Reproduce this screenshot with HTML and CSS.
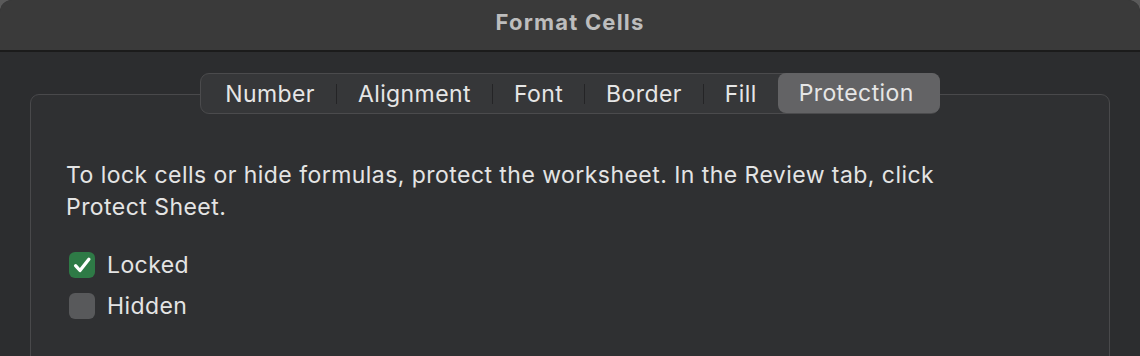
FILE: index.html
```html
<!DOCTYPE html>
<html lang="en">
<head>
    <meta charset="UTF-8">
    <title>Format Cells</title>
    <link rel="stylesheet" href="styles.css">
</head>
<body>
    <div class="window">
        <div class="titlebar">Format Cells</div>

        <div class="content">
            <div class="tabs">
                <div class="tab">Number</div>
                <span class="sep"></span>
                <div class="tab">Alignment</div>
                <span class="sep"></span>
                <div class="tab">Font</div>
                <span class="sep"></span>
                <div class="tab">Border</div>
                <span class="sep"></span>
                <div class="tab">Fill</div>
                <div class="tab active">Protection</div>
            </div>

            <div class="panel">
                <p class="note">To lock cells or hide formulas, protect the worksheet. In the Review tab, click Protect Sheet.</p>

                <label class="check">
                    <span class="box checked">
                        <svg viewBox="0 0 24 24"><path d="M5 12.8l4.8 5.2L19.5 5.8" fill="none" stroke="#fff" stroke-width="3.6" stroke-linecap="round" stroke-linejoin="round"/></svg>
                    </span>
                    Locked
                </label>
                <label class="check">
                    <span class="box"></span>
                    Hidden
                </label>
            </div>
        </div>
    </div>
</body>
</html>
```

FILE: styles.css
```css
* {
    margin: 0;
    padding: 0;
    box-sizing: border-box;
}

body {
    font-family: Inter, 'Helvetica Neue', 'Liberation Sans', sans-serif;
    background: #5a5a5a;
    color: #e2e2e2;
    height: 356px;
    overflow: hidden;
}

.window {
    background: #2c2d2f;
    border-radius: 12px 12px 0 0;
    height: 100%;
    overflow: hidden;
}

.titlebar {
    height: 52px;
    background: #3a3a3a;
    border-bottom: 2px solid #1b1b1b;
    text-align: center;
    font-size: 22px;
    font-weight: 700;
    letter-spacing: 1.2px;
    line-height: 45px;
    color: #bdbdbd;
}

.content {
    padding-top: 21px;
    display: flex;
    flex-direction: column;
    align-items: center;
}

.tabs {
    position: relative;
    z-index: 1;
    display: flex;
    align-items: center;
    height: 41px;
    margin-bottom: -20px;
    background: #363739;
    border: 1px solid #4b4b4d;
    border-radius: 9px;
    font-size: 23px;
    letter-spacing: 0.4px;
    color: #e6e6e6;
}

.tab {
    height: 100%;
    display: flex;
    align-items: center;
    padding: 0 21px;
}

.tab:first-child {
    padding-left: 24px;
}

.tab.active {
    margin-top: -1px;
    margin-right: -1px;
    height: 40px;
    padding: 0 26px 0 21px;
    background: #636365;
    border-radius: 8px;
}

.sep {
    width: 1px;
    height: 20px;
    background: #242426;
}

.panel {
    align-self: stretch;
    margin: 0 30px;
    height: 300px;
    background: #2f3032;
    border: 1px solid #49494b;
    border-radius: 9px;
    padding: 64px 35px 0;
}

.note {
    max-width: 900px;
    font-size: 23px;
    letter-spacing: 0.45px;
    line-height: 32px;
    color: #e4e4e4;
    margin-bottom: 21px;
}

.check {
    display: flex;
    align-items: center;
    gap: 12px;
    height: 41px;
    font-size: 23px;
    letter-spacing: 0.4px;
    color: #e4e4e4;
    padding-left: 3px;
}

.box {
    width: 26px;
    height: 26px;
    border-radius: 6px;
    background: #58595b;
    display: flex;
    align-items: center;
    justify-content: center;
}

.box.checked {
    background: #2e7a46;
}

.box svg {
    width: 22px;
    height: 22px;
}
```
